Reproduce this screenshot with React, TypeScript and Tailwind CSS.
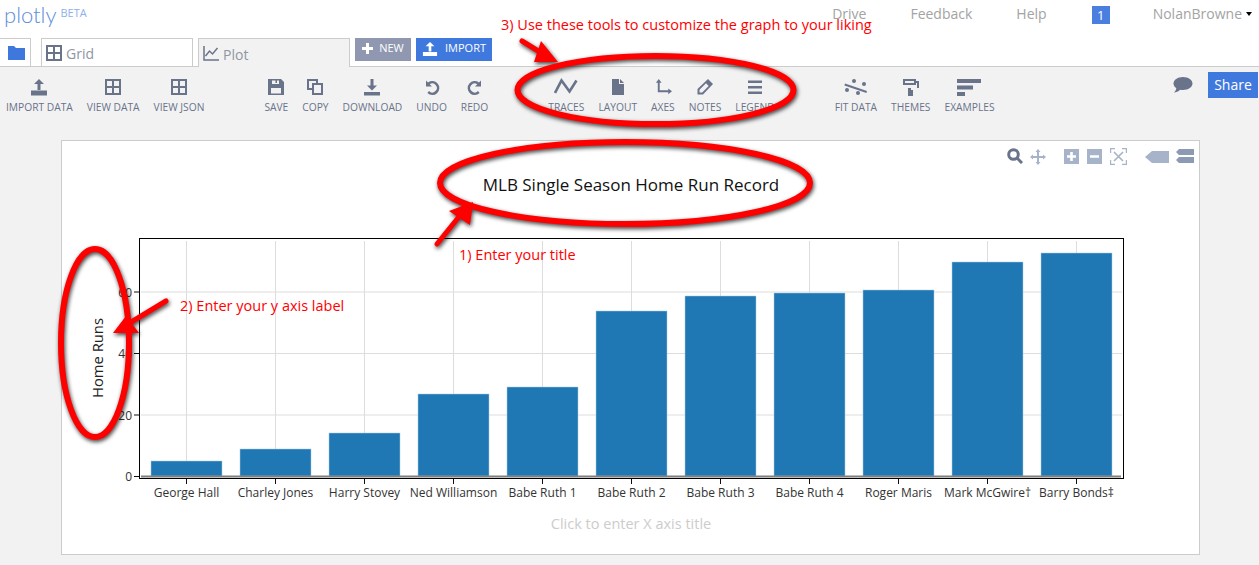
const font = { fontFamily: '"Open Sans", sans-serif' };

const Ic = ({ children, w = 18 }: { children: React.ReactNode; w?: number }) => (
  <svg width={w} height={18} viewBox={`0 0 ${w} 18`} className="block text-[#69738a]" fill="currentColor">
    {children}
  </svg>
);

const GridGlyph = () => (
  <path fillRule="evenodd" d="M1 1h16v16H1zM3 3v5h5V3zm7 0v5h5V3zM3 10v5h5v-5zm7 0v5h5v-5z" />
);

const UploadGlyph = () => (
  <>
    <path d="M1 12.500h16V17.500H1z" />
    <path d="M9 1l5 5h-3.500v6h-3V6H4z" />
  </>
);

const toolGroups = [
  [
    { label: 'IMPORT DATA', icon: <UploadGlyph /> },
    { label: 'VIEW DATA', icon: <GridGlyph /> },
    { label: 'VIEW JSON', icon: <GridGlyph /> },
  ],
  [
    { label: 'SAVE', icon: <path fillRule="evenodd" d="M1 1h13l3 3v13H1zM5 2.500V6h7V2.500h-2V5H8.500V2.500zM4 10v5.500h10V10z" /> },
    { label: 'COPY', icon: <path fillRule="evenodd" d="M1 1h11v4h5v12H6v-5H1zm2 2v7h3V5h4V3zm5 4v8h7V7z" /> },
    { label: 'DOWNLOAD', icon: <><path d="M1 14h16v3.500H1z" /><path d="M7.500 1h3v6.500H14L9 12.500 4 7.500h3.500z" /></> },
    { label: 'UNDO', icon: <><path d="M3 2.500l0 6h6L6.700 6.200A4.500 4.500 0 1 1 6 13l-1.600 2A7 7 0 1 0 5 4.500z" /></> },
    { label: 'REDO', icon: <><path d="M15 2.500l0 6H9l2.300-2.300A4.500 4.500 0 1 0 12 13l1.600 2A7 7 0 1 1 13 4.500z" /></> },
  ],
  [
    { label: 'TRACES', icon: <path fill="none" stroke="currentColor" strokeWidth="2.600" d="M1 15L7.500 2.500l8 11 7-11" />, w: 24 },
    { label: 'LAYOUT', icon: <path d="M3 1h7v5h5v11H3zM11 1l4 4h-4z" /> },
    { label: 'AXES', icon: <path d="M5 1L2 5h2v10h11v2l4-3-4-3v2H6V5h2z" transform="scale(.95)" />, w: 18 },
    { label: 'NOTES', icon: <path fillRule="evenodd" d="M12 1l5 5L7 16.500H1.500V11zM3.500 11.800v2.700h2.700l6.500-6.500-2.700-2.700z" /> },
    { label: 'LEGEND', icon: <path d="M2 2.500h14V5H2zM2 8h14v2.500H2zM2 13.500h14V16H2z" /> },
  ],
  [
    { label: 'FIT DATA', icon: <><path d="M1 5.500l22 7.500-.6 2L.4 7.500z" /><circle cx="10" cy="3" r="2" /><circle cx="20" cy="6" r="2" /><circle cx="3" cy="12" r="2" /><circle cx="14" cy="15" r="2" /></>, w: 24 },
    { label: 'THEMES', icon: <path fillRule="evenodd" d="M1 1h13v2h3v7H9v2h2v6H6v-8h9V5h-1v2H1zM3 3v2h9V3z" /> },
    { label: 'EXAMPLES', icon: <path d="M0 1h24v4H0zM0 7.500h16v4H0zM0 14h8v4H0z" />, w: 24 },
  ],
];

const bars = [
  { name: 'George Hall', top: 461 },
  { name: 'Charley Jones', top: 449 },
  { name: 'Harry Stovey', top: 433 },
  { name: 'Ned Williamson', top: 394 },
  { name: 'Babe Ruth 1', top: 387 },
  { name: 'Babe Ruth 2', top: 311 },
  { name: 'Babe Ruth 3', top: 296 },
  { name: 'Babe Ruth 4', top: 293 },
  { name: 'Roger Maris', top: 290 },
  { name: 'Mark McGwire†', top: 262 },
  { name: 'Barry Bonds‡', top: 253 },
];

const Chart = () => (
  <svg viewBox="62 141 1137 413" className="block w-full h-full" style={font}>
    <text x="631" y="191" textAnchor="middle" fontSize="17" fill="#111">MLB Single Season Home Run Record</text>
    <text transform="translate(103 358) rotate(-90)" textAnchor="middle" fontSize="14.800" fill="#222">Home Runs</text>
    <text x="631" y="529" textAnchor="middle" fontSize="14.500" fill="#ccc">Click to enter X axis title</text>

    {[415, 353.5, 292].map((y) => (
      <line key={y} x1="141" x2="1122" y1={y} y2={y} stroke="#ddd" strokeWidth="1" />
    ))}
    {bars.map((b, i) => {
      const cx = 186.5 + i * 89;
      return (
        <g key={b.name}>
          <line x1={cx} x2={cx} y1="241" y2="476" stroke="#ddd" />
          <rect x={cx - 35.5} y={b.top} width="71" height={476 - b.top} fill="#1f77b4" stroke="#a9cbe3" strokeWidth="0.5" />
          <line x1={cx} x2={cx} y1="478" y2="484" stroke="#111" />
          <text x={cx} y="497" textAnchor="middle" fontSize="12" fill="#333">{b.name}</text>
        </g>
      );
    })}
    <line x1="141" x2="1121" y1="476.500" y2="476.500" stroke="#7f7f7f" strokeWidth="2" />
    <rect x="139.500" y="238.500" width="984" height="240" fill="none" stroke="#000" />
    {[
      { y: 476.5, t: '0' },
      { y: 415, t: '20' },
      { y: 353.5, t: '40' },
      { y: 292, t: '60' },
    ].map((tk) => (
      <g key={tk.t}>
        <line x1="134" x2="139" y1={tk.y} y2={tk.y} stroke="#111" />
        <text x="132" y={tk.y + 4.5} textAnchor="end" fontSize="12" fill="#333">{tk.t}</text>
      </g>
    ))}
  </svg>
);

const ModeBar = () => (
  <div className="absolute top-[7px] right-[5px] flex items-center text-[#a6b3c9]">
    <svg width="16" height="16" viewBox="0 0 16 16" className="text-[#69738a] -mt-[2px]" fill="none" stroke="currentColor">
      <circle cx="6.500" cy="6.500" r="4.800" strokeWidth="3" />
      <path d="M10 10l5 5" strokeWidth="3" />
    </svg>
    <svg width="16" height="16" viewBox="0 0 16 16" className="ml-[7px]" fill="currentColor">
      <path d="M8 0l2.500 3H9v4h4V5.500L16 8l-3 2.500V9H9v4h1.500L8 16l-2.500-3H7V9H3v1.500L0 8l3-2.500V7h4V3H5.500z" />
    </svg>
    <svg width="15" height="15" viewBox="0 0 15 15" className="ml-[18px]" fill="currentColor">
      <path fillRule="evenodd" d="M0 0h15v15H0zM6.200 3v3.200H3v2.600h3.200V12h2.600V8.800H12V6.200H8.800V3z" />
    </svg>
    <svg width="15" height="15" viewBox="0 0 15 15" className="ml-[8px]" fill="currentColor">
      <path fillRule="evenodd" d="M0 0h15v15H0zM3 6.200v2.600h9V6.200z" />
    </svg>
    <svg width="17" height="17" viewBox="0 0 17 17" className="ml-[8px]" fill="none" stroke="currentColor" strokeWidth="1.200">
      <path d="M.6 5V.6H5M12 .6h4.400V5M.6 12v4.400H5M12 16.400h4.400V12" />
      <path d="M4 4l9 9M13 4l-9 9" strokeWidth="1.600" />
    </svg>
    <svg width="24" height="12" viewBox="0 0 24 12" className="ml-[18px]" fill="currentColor">
      <path d="M7 0h17v12H7L0 6z" />
    </svg>
    <svg width="18" height="15" viewBox="0 0 18 15" className="ml-[7px] text-[#8d9ab3]" fill="currentColor">
      <path d="M3 0h15v6H3L0 3zM3 8h15v6H3l-3-3z" />
    </svg>
  </div>
);

const Annotations = () => (
  <svg className="absolute inset-0 pointer-events-none" width="1259" height="565" viewBox="0 0 1259 565" style={font}>
    <g fill="none" stroke="#f00" strokeWidth="6" className="drop-shadow-[1px_2px_2px_rgba(0,0,0,0.75)]">
      <ellipse cx="655.500" cy="90" rx="138" ry="34" />
      <ellipse cx="625" cy="183" rx="185" ry="41" />
      <ellipse cx="95" cy="343" rx="34" ry="94" />
      <g strokeLinecap="round" strokeWidth="5" fill="#f00">
        <path d="M522 41L548 57" />
        <path stroke="none" d="M558 62L541 41 534 62z" />
        <path d="M166 301L128 324" />
        <path stroke="none" d="M113 333L126 316 139 333z" />
        <path d="M437 244L462 213" />
        <path stroke="none" d="M473 202L449 211 470 225z" />
      </g>
    </g>
    <g fill="#f00" fontSize="14.500">
      <text x="501" y="30">3) Use these tools to customize the graph to your liking</text>
      <text x="180" y="311">2) Enter your y axis label</text>
      <text x="459" y="260">1) Enter your title</text>
    </g>
  </svg>
);

const App = () => {
  return (
    <div className="relative w-[1259px] h-[565px] overflow-hidden bg-[#f2f2f2]" style={font}>
      <div className="bg-white h-[67px] border-b border-[#cccccc]">
        <div className="h-[38px] flex justify-between">
          <div className="flex items-start pl-[4px]">
            <span className="text-[22px] leading-[30px] font-light text-[#5d8ddd] font-['Lato']">plotly</span>
            <span className="ml-[4px] mt-[4px] text-[11px] leading-[18px] text-[#8fb0ea]">BETA</span>
          </div>
          <div className="flex items-start text-[14px] leading-[20px] text-[#a3a3a3] pt-[4px] pr-px">
            <span className="mr-[44px]">Drive</span>
            <span className="mr-[44px]">Feedback</span>
            <span className="mr-[45px]">Help</span>
            <span className="mt-[2px] mr-[43px] w-[18px] h-[18px] leading-[18px] bg-[#4a7fe0] text-white text-center text-[13px]">1</span>
            <span>NolanBrowne</span>
            <span className="ml-[4px] mr-[6px] mt-[8px] border-x-[3.5px] border-t-[4px] border-x-transparent border-t-black" />
          </div>
        </div>
        <div className="h-[28px] flex items-start">
          <div className="w-[31px] h-[28px] border-r border-t border-[#cccccc] flex justify-center pl-[2px] pt-[7px]">
            <svg width="17" height="14" viewBox="0 0 17 14" fill="#3f78dc">
              <path d="M0 0h6l2 2h9v12H0z" />
            </svg>
          </div>
          <div className="ml-[10px] w-[152px] h-[28px] border-x border-t border-[#cccccc] flex items-center pl-[4px] pt-[2px] gap-[4px] text-[14px] text-[#8f96a3]">
            <svg width="16" height="16" viewBox="1 1 16 16" fill="#69738a" className="block -mt-[2px]">
              <GridGlyph />
            </svg>
            Grid
          </div>
          <div className="ml-[5px] w-[152px] h-[29px] border-x border-t border-[#cccccc] bg-[#f2f2f2] flex items-center pl-[4px] pt-[2px] gap-[4px] text-[14px] text-[#8f96a3]">
            <svg width="16" height="16" viewBox="0 0 16 16" fill="none" stroke="#69738a" className="block -mt-[2px]">
              <path d="M1 1v14h15" strokeWidth="1.500" />
              <path d="M2.500 11l4-5 3 3 5-6" strokeWidth="1.500" />
            </svg>
            Plot
          </div>
          <div className="ml-[5px] w-[56px] h-[23px] bg-[#8f98b0] flex items-center justify-center gap-[6px] pb-[2px] text-white text-[11px] font-medium">
            <svg width="11" height="11" viewBox="0 0 11 11" fill="#fff"><path d="M4 0h3v4h4v3H7v4H4V7H0V4h4z" /></svg>
            NEW
          </div>
          <div className="ml-[5px] w-[76px] h-[23px] bg-[#4079dd] flex items-center justify-center gap-[7px] pb-[2px] text-white text-[11px] font-medium">
            <svg width="16" height="15" viewBox="0 0 18 17" fill="#fff"><UploadGlyph /></svg>
            IMPORT
          </div>
        </div>
      </div>

      <div className="h-[73px] flex items-start justify-between">
        <div className="flex items-start -ml-px">
          {toolGroups.map((group, i) => (
            <div key={i} className={i === 0 ? 'flex' : 'flex ml-[46px]'}>
              {group.map((t) => (
                <div key={t.label} className="px-[7px] pt-[11px] flex flex-col items-center">
                  <Ic w={t.w}>{t.icon}</Ic>
                  <span className="mt-[4px] text-[10.240px] leading-[14px] font-medium whitespace-nowrap text-[#69738a]">{t.label}</span>
                </div>
              ))}
            </div>
          ))}
        </div>
        <div className="flex items-start pt-[5px]">
          <svg width="20" height="17" viewBox="0 0 20 17" fill="#69738a" className="mt-[5px] mr-[15px]">
            <path d="M10 0c5.200 0 9.500 2.900 9.500 6.500S15.200 13 10 13c-1 0-2-.1-2.900-.3C5.500 14.500 3 15.500 1 15.500c1.300-1.200 2.200-2.500 2.300-4.400C1.500 9.900.5 8.300.5 6.500.5 2.900 4.800 0 10 0z" />
          </svg>
          <div className="w-[50px] h-[26px] mr-px bg-[#4079dd] text-white text-[14px] leading-[25px] text-center">Share</div>
        </div>
      </div>

      <div className="relative ml-[61px] w-[1139px] h-[415px] bg-white border border-[#cccccc]">
        <Chart />
        <ModeBar />
      </div>

      <Annotations />
    </div>
  );
};

export default App;
